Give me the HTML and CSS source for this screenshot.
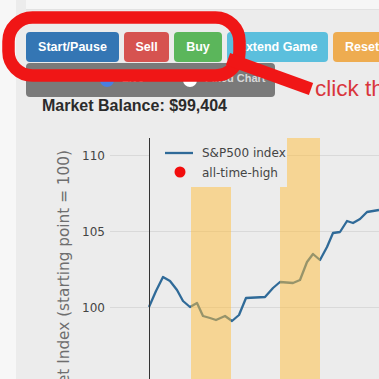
FILE: index.html
```html
<!DOCTYPE html>
<html>
<head>
<meta charset="utf-8">
<link rel="stylesheet" href="styles.css">
</head>
<body>
<div class="page">
  <div class="panel">
    <div class="topbox"></div>
    <div class="btn-row">
      <button class="btn btn-blue">Start/Pause</button>
      <button class="btn btn-red">Sell</button>
      <button class="btn btn-green">Buy</button>
      <button class="btn btn-cyan">Extend Game</button>
      <button class="btn btn-orange">Reset Game</button>
    </div>
    <div class="toggle-bar">
      <span class="dot dot-blue"></span>
      <span class="toggle-label first">Live</span>
      <span class="dot dot-white"></span>
      <span class="toggle-label">Fixed Chart</span>
    </div>
    <div class="balance">Market Balance: $99,404</div>
    <svg class="chart" viewBox="16 115 363 264" width="363" height="264">
      <g class="grid">
        <line x1="110" x2="379" y1="155.5" y2="155.5"/>
        <line x1="110" x2="379" y1="231.5" y2="231.5"/>
        <line x1="110" x2="379" y1="307.5" y2="307.5"/>
      </g>
      <g class="ticks">
        <text x="105" y="159.5">110</text>
        <text x="105" y="235.5">105</text>
        <text x="105" y="311.5">100</text>
      </g>
      <text class="axis-title" transform="translate(69,150) rotate(-90)">Market Index (starting point = 100)</text>
      <polyline class="series" points="149,307 156,291 163,277 170,281 177,290 183,301 190,307 197,303 203,316 210,318 216,320 225,316 232,321 239,315 246,298 265,297 273,288 280,282 293,283 300,280 307,262 313,254 320,260 327,247 333,233 340,232 347,221 353,223 360,219 367,212 379,210"/>
      <rect class="band" x="191" y="138" width="40" height="241"/>
      <rect class="band" x="280" y="138" width="40" height="241"/>
      <line class="axis" x1="149.5" x2="149.5" y1="138" y2="379"/>
      <rect class="legend-bg" x="150" y="125" width="137" height="62"/>
      <line class="series" x1="165" x2="193" y1="153" y2="153"/>
      <text class="legend-text" x="202" y="157">S&amp;P500 index</text>
      <circle cx="180" cy="172" r="5.5" fill="#f20d0d"/>
      <text class="legend-text" x="202" y="176.5">all-time-high</text>
    </svg>
  </div>
  <svg class="annotation" viewBox="0 0 379 379" width="379" height="379">
    <rect x="8.5" y="17.5" width="231" height="58" rx="24" ry="24"/>
    <line x1="228" y1="59" x2="311" y2="89"/>
  </svg>
  <div class="note">click the buttons</div>
</div>
</body>
</html>
```
FILE: styles.css
```css
html, body {
  margin: 0;
  padding: 0;
  overflow: hidden;
  width: 379px;
  height: 379px;
  background: #f7f7f7;
}
.page {
  position: relative;
  width: 379px;
  height: 379px;
  overflow: hidden;
  font-family: "Liberation Sans", Arial, sans-serif;
}
.panel {
  margin-left: 16px;
  height: 379px;
  background: #ececec;
  display: flex;
  flex-direction: column;
  overflow: hidden;
}
.topbox {
  margin-left: 10px;
  height: 10px;
  background: #f6f6f6;
  border-bottom: 1px solid #e2e2e2;
  box-sizing: border-box;
  flex: none;
}
.btn-row {
  display: flex;
  gap: 5px;
  margin-top: 22px;
  margin-left: 10px;
  height: 30px;
  flex: none;
  white-space: nowrap;
}
.btn {
  height: 30px;
  padding: 0 12px;
  border: none;
  border-radius: 4px;
  color: #fff;
  font-family: "Liberation Sans", Arial, sans-serif;
  font-weight: bold;
  font-size: 12.5px;
  flex: none;
}
.btn-blue { background: #3476b4; width: 93px; padding: 0; }
.btn-red { background: #d65350; width: 45px; padding: 0; }
.btn-green { background: #5bb65b; width: 48px; padding: 0; }
.btn-cyan { background: #5bbfdd; width: 101px; padding: 0; }
.btn-orange { background: #eeac50; }
.toggle-bar {
  margin-top: 1px;
  margin-left: 10px;
  width: 249px;
  height: 34px;
  background: #7a7a7a;
  border-radius: 4px;
  display: flex;
  align-items: center;
  flex: none;
  font-size: 11px;
  line-height: 11px;
  font-weight: bold;
  color: #d8d8d8;
}
.dot {
  width: 14px;
  height: 14px;
  border-radius: 50%;
  flex: none;
}
.dot-blue {
  margin-left: 74px;
  background: #4a7fe0;
}
.dot-white {
  margin-left: 40px;
  background: #ffffff;
}
.toggle-label {
  margin-left: 8px;
  margin-bottom: 4px;
}
.toggle-label.first {
  width: 21px;
  overflow: hidden;
}
.balance {
  margin-left: 26px;
  font-size: 16px;
  font-weight: bold;
  line-height: 18px;
  color: #2b2b2b;
  flex: none;
}
.chart {
  display: block;
  flex: none;
  font-family: "DejaVu Sans", Verdana, sans-serif;
}
.grid line {
  stroke: #d9d9d9;
  stroke-width: 1;
}
.ticks text {
  font-size: 12px;
  fill: #444;
  text-anchor: end;
}
.axis-title {
  font-size: 15.3px;
  fill: #6e6e6e;
  text-anchor: end;
}
.series {
  fill: none;
  stroke: #2f6a98;
  stroke-width: 2.3;
  stroke-linejoin: round;
}
.band {
  fill: rgb(255, 190, 60);
  opacity: 0.5;
}
.axis {
  stroke: #333;
  stroke-width: 1;
}
.legend-bg {
  fill: #ececec;
}
.legend-text {
  font-size: 12px;
  fill: #444;
}
.annotation {
  position: absolute;
  left: 0;
  top: 0;
  pointer-events: none;
}
.annotation rect,
.annotation line {
  fill: none;
  stroke: #f01616;
  stroke-width: 12.5;
}
.note {
  position: absolute;
  left: 315px;
  top: 78px;
  font-size: 22.5px;
  line-height: 22.5px;
  color: #d9353c;
  white-space: nowrap;
}
```
